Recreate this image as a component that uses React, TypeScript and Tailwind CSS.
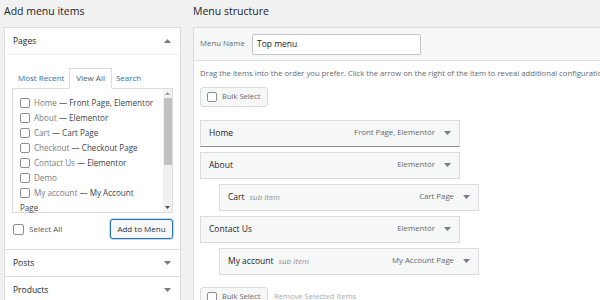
import React from "react"

const font = { fontFamily: '"Open Sans", "Noto Sans", sans-serif' }

function Caret({ up = false }: { up?: boolean }) {
  return (
    <svg width="7" height="4" viewBox="0 0 7 4" className="shrink-0">
      <path d={up ? "M0 4 L3.5 0 L7 4 Z" : "M0 0 L7 0 L3.5 4 Z"} fill="#787c82" />
    </svg>
  )
}

function Box({ size = 10 }: { size?: number }) {
  return (
    <span
      className="inline-block shrink-0 rounded-[2px] border border-[#8c8f94] bg-white"
      style={{ width: size, height: size }}
    />
  )
}

const pages = [
  ["Home", "Front Page, Elementor"],
  ["About", "Elementor"],
  ["Cart", "Cart Page"],
  ["Checkout", "Checkout Page"],
  ["Contact Us", "Elementor"],
  ["Demo", ""],
]

function MenuItem({
  title,
  type,
  sub = false,
  active = false,
}: {
  title: string
  type: string
  sub?: boolean
  active?: boolean
}) {
  return (
    <div
      className={`flex h-[27px] w-[260px] items-center whitespace-nowrap border bg-[#f6f7f7] pl-[8px] pr-[8px] ${
        sub ? "ml-[19px]" : ""
      } ${active ? "border-[#dcdcde] border-b-[#8c8f94]" : "border-[#dcdcde]"}`}
    >
      <span className="text-[8.5px] font-medium text-[#1d2327]">{title}</span>
      {sub && <span className="ml-[5px] text-[8px] italic text-[#8c8f94]">sub item</span>}
      <span className="ml-auto mr-[9px] text-[7.8px] text-[#646970]">{type}</span>
      <Caret />
    </div>
  )
}

function BulkSelect() {
  return (
    <div className="flex h-[20px] w-[68px] items-center gap-[5px] whitespace-nowrap rounded-[3px] border border-[#dcdcde] bg-[#f6f7f7] pl-[6px]">
      <Box />
      <span className="text-[7.6px] text-[#646970]">Bulk Select</span>
    </div>
  )
}

export default function App() {
  return (
    <div className="flex h-[300px] w-[600px] overflow-hidden bg-[#f1f1f1] text-[#3c434a]" style={font}>
      {/* Left column */}
      <div className="ml-[4px] w-[177px] shrink-0">
        <div className="h-[27px] pt-[4px] text-[10.5px] text-[#1d2327]">Add menu items</div>
        <div className="border border-[#dcdcde] bg-white">
          <div className="flex h-[27px] items-center justify-between border-b border-[#f0f0f1] pl-[8px] pr-[9px]">
            <span className="text-[8.5px] text-[#1d2327]">Pages</span>
            <Caret up />
          </div>
          <div className="px-[7px] pt-[13px]">
            <div className="flex items-end whitespace-nowrap text-[8px] text-[#2271b1]">
              <span className="pb-[4px] pl-[6px] pr-[5px]">Most Recent</span>
              <span className="-mb-px border border-b-white border-[#dcdcde] bg-white px-[6px] pb-[4px] pt-[3px] text-[#50575e]">
                View All
              </span>
              <span className="px-[4px] pb-[4px]">Search</span>
            </div>
            <div className="flex h-[125px] border border-[#dcdcde] bg-white">
              <div className="flex-1 whitespace-nowrap pl-[7px] pt-[6px] text-[8.1px] leading-[15px]">
                {pages.map(([t, s]) => (
                  <div key={t} className="flex items-center gap-[4px]">
                    <Box />
                    <span>
                      <span className="text-[#787c82]">{t}</span>
                      {s && <span className="font-medium text-[#3c434a]"> — {s}</span>}
                    </span>
                  </div>
                ))}
                <div className="flex items-center gap-[4px]">
                  <Box />
                  <span>
                    <span className="text-[#787c82]">My account</span>
                    <span className="font-medium text-[#3c434a]"> — My Account</span>
                  </span>
                </div>
                <div className="font-medium text-[#3c434a]">Page</div>
              </div>
              <div className="flex w-[9px] flex-col items-center bg-[#f1f1f1] py-[3px]">
                <svg width="5" height="3" viewBox="0 0 5 3"><path d="M0 3 L2.5 0 L5 3 Z" fill="#a0a0a0" /></svg>
                <div className="mt-[3px] h-[67px] w-[8px] bg-[#c1c1c1]" />
                <div className="flex-1" />
                <svg width="5" height="3" viewBox="0 0 5 3"><path d="M0 0 L5 0 L2.5 3 Z" fill="#505050" /></svg>
              </div>
            </div>
            <div className="flex items-center justify-between py-[6px]">
              <div className="flex items-center gap-[5px] pl-[1px]">
                <Box size={11} />
                <span className="text-[8px] text-[#50575e]">Select All</span>
              </div>
              <button className="h-[20px] w-[63px] whitespace-nowrap rounded-[3px] border border-[#2271b1] bg-[#f6f7f7] text-[8px] text-[#2c3338] shadow-[0_0_0_1px_#c5d9ed]">
                Add to Menu
              </button>
            </div>
          </div>
          <div className="mt-[4px] flex h-[27px] items-center justify-between border-t border-[#dcdcde] pl-[8px] pr-[9px]">
            <span className="text-[8.5px] font-medium text-[#1d2327]">Posts</span>
            <Caret />
          </div>
          <div className="flex h-[27px] items-center justify-between border-t border-[#dcdcde] pl-[8px] pr-[9px]">
            <span className="text-[8.5px] font-medium text-[#1d2327]">Products</span>
            <Caret />
          </div>
        </div>
      </div>

      {/* Right column */}
      <div className="ml-[12px] min-w-0 flex-1">
        <div className="h-[27px] pt-[4px] text-[10.5px] text-[#1d2327]">Menu structure</div>
        <div className="h-[300px] border-l border-t border-[#dcdcde] bg-white">
          <div className="flex h-[33px] items-center border-b border-[#dcdcde] bg-[#f6f7f7] pl-[6px]">
            <span className="w-[52px] whitespace-nowrap text-[7.8px] text-[#646970]">Menu Name</span>
            <div className="flex h-[21px] w-[169px] items-center rounded-[2px] border border-[#c3c4c7] bg-white pl-[4px] text-[8.5px] text-[#1d2327]">
              Top menu
            </div>
          </div>
          <div className="pl-[6px]">
            <div className="mt-[7px] whitespace-nowrap text-[7.7px] text-[#646970]">
              Drag the items into the order you prefer. Click the arrow on the right of the item to reveal additional configuration options.
            </div>
            <div className="mt-[7px]">
              <BulkSelect />
            </div>
            <div className="mt-[13px] flex flex-col gap-[5px]">
              <MenuItem title="Home" type="Front Page, Elementor" active />
              <MenuItem title="About" type="Elementor" />
              <MenuItem title="Cart" type="Cart Page" sub />
              <MenuItem title="Contact Us" type="Elementor" />
              <MenuItem title="My account" type="My Account Page" sub />
            </div>
            <div className="mt-[12px] flex items-center gap-[6px]">
              <BulkSelect />
              <span className="whitespace-nowrap text-[7.6px] text-[#a7aaad]">Remove Selected Items</span>
            </div>
          </div>
        </div>
      </div>
    </div>
  )
}
